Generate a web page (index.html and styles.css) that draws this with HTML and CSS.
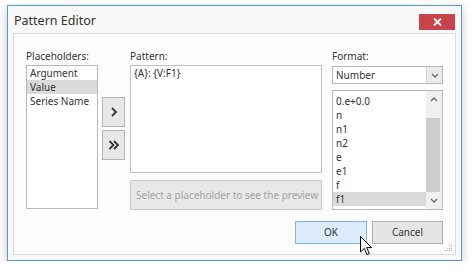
FILE: index.html
```html
<!DOCTYPE html>
<html lang="en">
<head>
    <meta charset="UTF-8">
    <title>Pattern Editor</title>
    <link rel="stylesheet" href="styles.css">
</head>
<body>

    <!-- Dialog window -->
    <div class="window">
        <div class="titlebar">
            <span class="title">Pattern Editor</span>
            <div class="close">
                <svg width="9" height="8" viewBox="0 0 9 8"><path d="M1 0.5 L8 7.5 M8 0.5 L1 7.5" stroke="#fff" stroke-width="1.8"/></svg>
            </div>
        </div>

        <div class="panel">
            <div class="columns">
                <!-- Placeholders -->
                <div class="col col-placeholders">
                    <div class="label">Placeholders:</div>
                    <ul class="listbox">
                        <li>Argument</li>
                        <li class="selected">Value</li>
                        <li>Series Name</li>
                    </ul>
                </div>

                <!-- Insert buttons -->
                <div class="col col-arrows">
                    <div class="arrow-btn">
                        <svg width="8" height="10" viewBox="0 0 8 10"><path d="M2 1 L6 5 L2 9" fill="none" stroke="#333" stroke-width="1.8"/></svg>
                    </div>
                    <div class="arrow-btn">
                        <svg width="12" height="10" viewBox="0 0 12 10"><path d="M1.5 1 L5.5 5 L1.5 9 M6 1 L10 5 L6 9" fill="none" stroke="#333" stroke-width="1.8"/></svg>
                    </div>
                </div>

                <!-- Pattern -->
                <div class="col col-pattern">
                    <div class="label">Pattern:</div>
                    <div class="pattern-box">{A}: {V:F1}</div>
                    <div class="preview">Select a placeholder to see the preview</div>
                </div>

                <!-- Format -->
                <div class="col col-format">
                    <div class="label">Format:</div>
                    <div class="combo">
                        <span class="combo-text">Number</span>
                        <span class="combo-btn">
                            <svg width="8" height="5" viewBox="0 0 8 5"><path d="M1 1 L4 4 L7 1" fill="none" stroke="#666" stroke-width="1.3"/></svg>
                        </span>
                    </div>
                    <div class="format-list">
                        <ul class="format-items">
                            <li>0.e+0.0</li>
                            <li>n</li>
                            <li>n1</li>
                            <li>n2</li>
                            <li>e</li>
                            <li>e1</li>
                            <li>f</li>
                            <li class="selected">f1</li>
                        </ul>
                        <div class="scrollbar">
                            <div class="scroll-arrow">
                                <svg width="8" height="5" viewBox="0 0 8 5"><path d="M1 4 L4 1 L7 4" fill="none" stroke="#666" stroke-width="1.3"/></svg>
                            </div>
                            <div class="scroll-track">
                                <div class="scroll-thumb"></div>
                            </div>
                            <div class="scroll-arrow">
                                <svg width="8" height="5" viewBox="0 0 8 5"><path d="M1 1 L4 4 L7 1" fill="none" stroke="#666" stroke-width="1.3"/></svg>
                            </div>
                        </div>
                    </div>
                </div>
            </div>

            <!-- Dialog buttons -->
            <div class="footer">
                <div class="btn btn-ok">OK</div>
                <div class="btn">Cancel</div>
            </div>

            <svg class="grip" width="8" height="8" viewBox="0 0 8 8">
                <rect x="6" y="0" width="1" height="1" fill="#b5b5b5"/>
                <rect x="4" y="2" width="1" height="1" fill="#b5b5b5"/>
                <rect x="6" y="2" width="1" height="1" fill="#b5b5b5"/>
                <rect x="2" y="4" width="1" height="1" fill="#b5b5b5"/>
                <rect x="4" y="4" width="1" height="1" fill="#b5b5b5"/>
                <rect x="6" y="4" width="1" height="1" fill="#b5b5b5"/>
                <rect x="0" y="6" width="1" height="1" fill="#b5b5b5"/>
                <rect x="2" y="6" width="1" height="1" fill="#b5b5b5"/>
                <rect x="4" y="6" width="1" height="1" fill="#b5b5b5"/>
                <rect x="6" y="6" width="1" height="1" fill="#b5b5b5"/>
            </svg>
        </div>

        <!-- Mouse pointer over the OK button -->
        <svg class="cursor" width="13" height="20" viewBox="0 0 13 20">
            <path d="M0.5 0.5 L0.5 16 L4.3 12.4 L7 18.6 L9.3 17.6 L6.7 11.6 L11.6 11.6 Z" fill="#fff" stroke="#000" stroke-width="1"/>
        </svg>
    </div>

</body>
</html>
```

FILE: styles.css
```css
/* Global Styles */
body {
    margin: 0;
    padding: 5px 0 0 7px;
    background-color: #fff;
    font-family: 'Noto Sans', 'Open Sans', sans-serif;
    font-size: 10px;
    color: #333;
}

ul {
    list-style: none;
    margin: 0;
    padding: 0;
}

/* Window frame */
.window {
    position: relative;
    width: 453px;
    height: 254px;
    border: 1px solid #5b97cf;
    background-color: #f9f9f9;
    box-shadow: 0 3px 9px rgba(0, 0, 0, 0.22);
    display: flex;
    flex-direction: column;
}

.titlebar {
    height: 27px;
    display: flex;
    align-items: center;
    justify-content: space-between;
    padding: 0 6px 0 6px;
}

.title {
    font-size: 12.5px;
    color: #333;
    margin-top: 1px;
}

.close {
    width: 36px;
    height: 16px;
    margin-top: 5px;
    background-color: #c9434b;
    display: flex;
    align-items: center;
    justify-content: center;
}

/* Inner panel */
.panel {
    position: relative;
    margin: 0 5px;
    border: 1px solid #dadada;
    background-color: #fdfdfd;
    padding: 15px 12px 10px 12px;
}

.columns {
    display: flex;
    align-items: flex-start;
}

.col {
    display: flex;
    flex-direction: column;
}

.label {
    height: 14px;
    line-height: 14px;
    margin-bottom: 2px;
}

/* Placeholders list */
.col-placeholders {
    width: 72px;
}

.listbox {
    height: 142px;
    border: 1px solid #b9b9b9;
    background-color: #fff;
}

.listbox li {
    height: 14px;
    line-height: 14px;
    padding-left: 3px;
}

.listbox li.selected {
    background-color: #dadada;
}

/* Insert buttons */
.col-arrows {
    margin-left: 4px;
    margin-top: 48px;
    gap: 3px;
}

.arrow-btn {
    width: 21px;
    height: 28px;
    border: 1px solid #b4b4b4;
    background-color: #e8e8e8;
    display: flex;
    align-items: center;
    justify-content: center;
}

/* Pattern */
.col-pattern {
    width: 192px;
    margin-left: 5px;
}

.pattern-box {
    height: 106px;
    border: 1px solid #c4c4c4;
    background-color: #fff;
    padding: 0 3px;
    line-height: 14px;
}

.preview {
    margin-top: 7px;
    height: 28px;
    line-height: 28px;
    border: 1px solid #c9c9c9;
    background-color: #e8e8e8;
    color: #a3a3a3;
    padding-left: 5px;
    white-space: nowrap;
    overflow: hidden;
}

/* Format */
.col-format {
    width: 111px;
    margin-left: 10px;
}

.combo {
    margin-top: 1px;
    height: 16px;
    border: 1px solid #b9b9b9;
    background-color: #fff;
    display: flex;
}

.combo-text {
    flex: 1;
    line-height: 16px;
    padding-left: 3px;
}

.combo-btn {
    width: 15px;
    background-color: #ebebeb;
    border-left: 1px solid #d6d6d6;
    display: flex;
    align-items: center;
    justify-content: center;
}

.format-list {
    margin-top: 6px;
    height: 118px;
    border: 1px solid #b9b9b9;
    background-color: #fff;
    display: flex;
}

.format-items {
    flex: 1;
    padding-top: 3px;
}

.format-items li {
    height: 14px;
    line-height: 14px;
    padding-left: 3px;
}

.format-items li.selected {
    background-color: #dadada;
}

/* Scrollbar */
.scrollbar {
    width: 16px;
    background-color: #f0f0f0;
    display: flex;
    flex-direction: column;
}

.scroll-arrow {
    height: 17px;
    display: flex;
    align-items: center;
    justify-content: center;
}

.scroll-track {
    flex: 1;
    padding: 10px 2px 0 0;
    display: flex;
}

.scroll-thumb {
    flex: 1;
    background-color: #cdcdcd;
}

/* Dialog buttons */
.footer {
    margin-top: 11px;
    display: flex;
    justify-content: flex-end;
    gap: 5px;
}

.btn {
    width: 69px;
    height: 21px;
    line-height: 21px;
    text-align: center;
    border: 1px solid #adadad;
    background-color: #e5e5e5;
}

.btn-ok {
    width: 70px;
    border-color: #7eb4ea;
    background-color: #dcecfc;
}

.grip {
    position: absolute;
    right: 2px;
    bottom: 2px;
}

.cursor {
    position: absolute;
    left: 352px;
    top: 230px;
}
```
